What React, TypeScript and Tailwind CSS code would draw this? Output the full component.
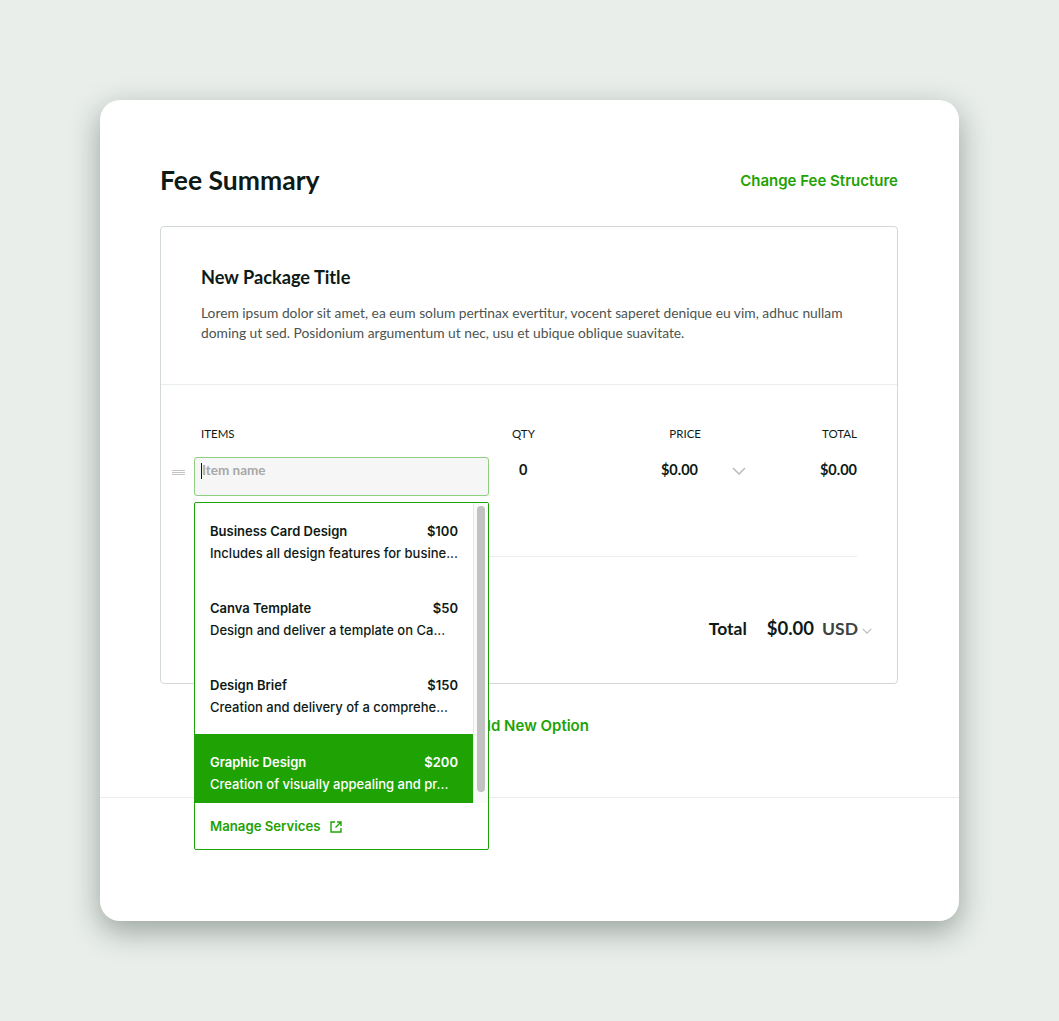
const services = [
  { name: "Business Card Design", price: "$100", desc: "Includes all design features for busine..." },
  { name: "Canva Template", price: "$50", desc: "Design and deliver a template on Ca..." },
  { name: "Design Brief", price: "$150", desc: "Creation and delivery of a comprehe..." },
  { name: "Graphic Design", price: "$200", desc: "Creation of visually appealing and pr...", active: true },
];

function Chevron({ className }: { className: string }) {
  return (
    <svg viewBox="0 0 14 8" fill="none" stroke="currentColor" strokeWidth="1.5" className={className}>
      <path d="M1 1l6 6 6-6" />
    </svg>
  );
}

function ServiceDropdown() {
  return (
    <div className="absolute left-0 top-[45px] z-10 w-[295px] h-[348px] bg-white border border-[#1fa204] rounded-[2px] flex flex-col font-['Inter',sans-serif] overflow-hidden">
      <div className="flex h-[300px] overflow-hidden">
        <div className="w-[278px]">
          {services.map((s) => (
            <div
              key={s.name}
              className={`h-[77px] px-[15px] pt-[18px] ${s.active ? "bg-[#1fa204] text-white" : "text-[#0e1a16]"}`}
            >
              <div className="flex justify-between text-[13px] leading-[20px] font-semibold">
                <span>{s.name}</span>
                <span>{s.price}</span>
              </div>
              <div className="mt-[2px] text-[13px] leading-[20px] font-medium whitespace-nowrap">{s.desc}</div>
            </div>
          ))}
        </div>
        <div className="w-[15px] bg-[#fafafa] border-l border-[#e8e8e8] pt-[3px] pl-[3px]">
          <div className="w-[8px] h-[286px] rounded-full bg-[#c1c1c1]" />
        </div>
      </div>
      <div className="flex items-center gap-[10px] pl-[15px] pt-[2px] h-[46px] text-[#1fa204] text-[13.2px] font-semibold">
        <span>Manage Services</span>
        <svg viewBox="0 0 12 12" fill="none" stroke="currentColor" strokeWidth="1.4" className="w-[12px] h-[12px]">
          <path d="M5 1H1v10h10V7M7 1h4v4M11 1L5.5 6.5" />
        </svg>
      </div>
    </div>
  );
}

export default function App() {
  return (
    <div className="min-h-[1021px] bg-[#e9eeea] pt-[100px] pl-[100px] font-['Lato',sans-serif] text-[#0e1a16]">
      <div className="w-[859px] h-[821px] bg-white rounded-[20px] shadow-[0_10px_30px_rgba(20,40,30,0.38)]">
        <div className="pl-[60px] pr-[61px] pt-[62px]">
          <div className="flex items-center justify-between h-[36px]">
            <h1 className="text-[26.5px] font-bold leading-[36px]">Fee Summary</h1>
            <a className="pt-[3px] font-['Inter',sans-serif] text-[15px] font-semibold text-[#1fa204]">Change Fee Structure</a>
          </div>
          <div className="mt-[28px] h-[458px] border border-[#d2d9d4] rounded-[4px]">
            <div className="h-[158px] px-[40px] pt-[39px] border-b border-[#e9eeea]">
              <h2 className="text-[18.2px] leading-[23px] font-bold">New Package Title</h2>
              <p className="mt-[14px] text-[13.8px] leading-[20px] text-[#4c5450]">
                Lorem ipsum dolor sit amet, ea eum solum pertinax evertitur, vocent saperet denique eu vim, adhuc nullam
                doming ut sed. Posidonium argumentum ut nec, usu et ubique oblique suavitate.
              </p>
            </div>
            <div className="px-[40px]">
              <div className="flex items-center h-[20px] mt-[39px] text-[11.5px] leading-[20px]">
                <span className="w-[311px]">ITEMS</span>
                <span className="w-[60px]">QTY</span>
                <span className="w-[129px] text-right">PRICE</span>
                <span className="w-[156px] text-right">TOTAL</span>
              </div>
              <div className="relative mt-[13px] flex h-[39px] -ml-[7px]">
                <div className="absolute -left-[22px] top-[13px] w-[13px] flex flex-col gap-px">
                  <div className="h-px bg-[#c4c4c4]" />
                  <div className="h-px bg-[#c4c4c4]" />
                  <div className="h-px bg-[#c4c4c4]" />
                </div>
                <div className="w-[295px] h-[39px] bg-[#f6f6f6] border border-[#8ed080] rounded-[3px] pl-[6px] pt-[2px] flex items-start">
                  <div className="w-px h-[16px] mt-[3px] bg-[#0e1a16]" />
                  <span className="text-[13.5px] leading-[20px] font-bold text-[#a8a8a8]">Item name</span>
                </div>
                <ServiceDropdown />
                <div className="flex items-start h-[26px] leading-[26px] text-[14.5px] font-bold">
                  <span className="ml-[30px] w-[139px]">0</span>
                  <span className="w-[40px] text-right whitespace-nowrap flex justify-end">$0.00</span>
                  <Chevron className="ml-[34px] mt-[10px] w-[14px] h-[8px] text-[#b8bcba]" />
                  <span className="ml-[71px] w-[40px] whitespace-nowrap flex justify-end">$0.00</span>
                </div>
              </div>
              <div className="mt-[60px] h-px bg-[#e9eeea]" />
              <div className="flex items-center justify-end h-[32px] mt-[56px] -mr-[15px] font-bold">
                <span className="text-[17.5px]">Total</span>
                <span className="ml-[20px] text-[18.5px]">$0.00</span>
                <span className="ml-[8px] text-[17.5px] text-[#3c4340]">USD</span>
                <Chevron className="ml-[4px] mt-[4px] w-[10px] h-[6px] text-[#b8bcba]" />
              </div>
            </div>
          </div>
          <div className="mt-[32px] pr-[12px] h-[20px] leading-[20px] text-center font-['Inter',sans-serif] text-[15px] font-semibold text-[#1fa204]">+ Add New Option</div>
        </div>
        <div className="mt-[61px] h-px bg-[#e9eeea]" />
      </div>
    </div>
  );
}
